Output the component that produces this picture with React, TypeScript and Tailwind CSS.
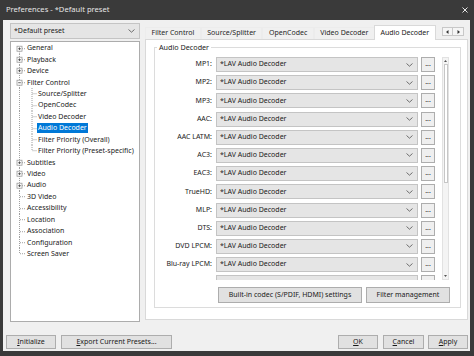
import React from 'react';

type TreeNode = {
  label: string;
  kind: 'plus' | 'minus' | 'leaf' | 'child';
  selected?: boolean;
  lastChild?: boolean;
};

const treeItems: TreeNode[] = [
  { label: 'General', kind: 'plus' },
  { label: 'Playback', kind: 'plus' },
  { label: 'Device', kind: 'plus' },
  { label: 'Filter Control', kind: 'minus' },
  { label: 'Source/Splitter', kind: 'child' },
  { label: 'OpenCodec', kind: 'child' },
  { label: 'Video Decoder', kind: 'child' },
  { label: 'Audio Decoder', kind: 'child', selected: true },
  { label: 'Filter Priority (Overall)', kind: 'child' },
  { label: 'Filter Priority (Preset-specific)', kind: 'child', lastChild: true },
  { label: 'Subtitles', kind: 'plus' },
  { label: 'Video', kind: 'plus' },
  { label: 'Audio', kind: 'plus' },
  { label: '3D Video', kind: 'leaf' },
  { label: 'Accessibility', kind: 'leaf' },
  { label: 'Location', kind: 'leaf' },
  { label: 'Association', kind: 'leaf' },
  { label: 'Configuration', kind: 'leaf' },
  { label: 'Screen Saver', kind: 'leaf' },
];

// last entry is the row scrolled mostly out of view
const codecs = [
  'MP1', 'MP2', 'MP3', 'AAC', 'AAC LATM', 'AC3', 'EAC3', 'TrueHD',
  'MLP', 'DTS', 'DVD LPCM', 'Blu-ray LPCM', '',
];

const tabs = ['Filter Control', 'Source/Splitter', 'OpenCodec', 'Video Decoder', 'Audio Decoder'];

const ROW_H = 11.44;
const LINE = '#a0a0a0';

const Chevron = () => (
  <svg width="7" height="4" viewBox="0 0 7 4" className="shrink-0">
    <path d="M0.5 0.5 L3.5 3.2 L6.5 0.5" fill="none" stroke="#606060" strokeWidth="0.9" />
  </svg>
);

const Combo = ({ text, className }: { text: string; className: string }) => (
  <div className={`flex items-center bg-[#e5e5e5] border border-[#c4c4c4] pl-[3px] pr-[4px] ${className}`}>
    <span className="flex-1 truncate">{text}</span>
    <Chevron />
  </div>
);

const TreeRow = ({ node, first, last }: { node: TreeNode; first: boolean; last: boolean }) => {
  const c = ROW_H / 2;
  const isChild = node.kind === 'child';
  return (
    <div className="flex items-center h-[11.44px]">
      <svg width="14" height={ROW_H} className="shrink-0">
        <line x1="7.5" y1={first ? c : 0} x2="7.5" y2={last ? c : ROW_H} stroke={LINE} strokeDasharray="1 1" />
        {!isChild && <line x1="8" y1={c} x2="14" y2={c} stroke={LINE} strokeDasharray="1 1" />}
        {(node.kind === 'plus' || node.kind === 'minus') && (
          <g>
            <rect x="5" y={c - 2.5} width="5" height="5" fill="#fff" stroke="#9c9c9c" strokeWidth="0.8" />
            <line x1="6.2" y1={c} x2="8.8" y2={c} stroke="#404040" strokeWidth="0.8" />
            {node.kind === 'plus' && <line x1="7.5" y1={c - 1.3} x2="7.5" y2={c + 1.3} stroke="#404040" strokeWidth="0.8" />}
          </g>
        )}
      </svg>
      {isChild && (
        <svg width="11" height={ROW_H} className="shrink-0">
          <line x1="6" y1="0" x2="6" y2={node.lastChild ? c : ROW_H} stroke={LINE} strokeDasharray="1 1" />
          <line x1="6.5" y1={c} x2="11" y2={c} stroke={LINE} strokeDasharray="1 1" />
        </svg>
      )}
      <span
        className={`px-[1px] leading-[10px] whitespace-nowrap ${node.selected ? 'bg-[#0078d7] text-white' : 'text-[#1a1a1a]'}`}
      >
        {node.label}
      </span>
    </div>
  );
};

const Btn = ({ children, className }: { children: React.ReactNode; className: string }) => (
  <div className={`flex items-center justify-center bg-[#e1e1e1] border border-[#adadad] text-[#1a1a1a] ${className}`}>
    {children}
  </div>
);

export default function App() {
  return (
    <div className="w-[474px] h-[356px] bg-[#3a3a3a] flex flex-col overflow-hidden font-['Noto_Sans',sans-serif] text-[7px] text-[#1a1a1a]">
      {/* title bar */}
      <div className="h-[20px] shrink-0 flex items-center justify-between pl-[6px] pr-[6px] text-[#e6e6e6] text-[7.6px]">
        <span>Preferences - *Default preset</span>
        <svg width="6" height="6" viewBox="0 0 6 6">
          <path d="M0.5 0.5 L5.5 5.5 M5.5 0.5 L0.5 5.5" stroke="#e6e6e6" strokeWidth="1" />
        </svg>
      </div>

      <div className="h-[331px] ml-[3px] mr-[4px] bg-[#f0f0f0] flex flex-col">
        <div className="flex gap-[5px] pl-[7px] pr-[2px] pt-[3px]">
          {/* left column */}
          <div className="w-[130px] flex flex-col gap-[2px]">
            <Combo text="*Default preset" className="h-[16px]" />
            <div className="h-[281px] bg-white border border-[#acacac] pt-[0.5px] pl-[1px]">
              {treeItems.map((n, i) => (
                <TreeRow key={n.label} node={n} first={i === 0} last={i === treeItems.length - 1} />
              ))}
            </div>
          </div>

          {/* right column */}
          <div className="flex-1 flex flex-col pt-[2px]">
            <div className="flex items-end h-[14px]">
              {tabs.map((t) =>
                t === 'Audio Decoder' ? (
                  <div
                    key={t}
                    className="relative z-10 h-[15px] -mb-px -mx-[1px] px-[5.5px] flex items-center bg-white border border-b-0 border-[#d9d9d9]"
                  >
                    {t}
                  </div>
                ) : (
                  <div key={t} className="h-[12px] px-[5.5px] flex items-center border border-b-0 border-[#ececec] text-[#262626]">
                    {t}
                  </div>
                )
              )}
              <div className="ml-auto mr-[4px] mb-[3px] flex">
                <div className="w-[11px] h-[9px] border border-[#c8c8c8] bg-[#f5f5f5] flex items-center justify-center">
                  <svg width="3" height="4" viewBox="0 0 3 4"><path d="M2.5 0 L0 2 L2.5 4 Z" fill="#333" /></svg>
                </div>
                <div className="w-[11px] h-[9px] border border-l-0 border-[#c8c8c8] bg-[#f5f5f5] flex items-center justify-center">
                  <svg width="3" height="4" viewBox="0 0 3 4"><path d="M0.5 0 L3 2 L0.5 4 Z" fill="#333" /></svg>
                </div>
              </div>
            </div>

            <div className="h-[281px] bg-white border border-[#d9d9d9] pl-[8px] pr-[6px] pt-[2px]">
              <fieldset className="border border-[#dcdcdc] pb-[4px]">
                <legend className="ml-[2px] px-[2px] leading-[10px] text-[7.2px]">Audio Decoder</legend>
                <div className="flex pt-[5px]">
                  <div className="h-[223px] overflow-hidden flex flex-col gap-[3.2px] w-[281px]">
                    {codecs.map((c, i) => (
                      <div key={i} className="flex items-center shrink-0 h-[15px]">
                        <span className="w-[58px] text-right pr-[1px] whitespace-nowrap">{c ? `${c}:` : ''}</span>
                        <Combo text={c ? '*LAV Audio Decoder' : ''} className="ml-[3px] w-[202px] h-[15px]" />
                        <div className="ml-[3px] w-[14px] h-[15px] bg-[#efefef] border border-[#adadad] flex items-center justify-center leading-none pb-[2px]">
                          {c ? '...' : ''}
                        </div>
                      </div>
                    ))}
                  </div>
                  <div className="ml-[6px] w-[7px] h-[223px] flex flex-col bg-[#f4f4f4] border border-[#e2e2e2]">
                    <div className="h-[6px] flex items-center justify-center">
                      <svg width="3" height="2" viewBox="0 0 3 2"><path d="M0 2 L1.5 0 L3 2 Z" fill="#555" /></svg>
                    </div>
                    <div className="flex-1 px-[0.5px]">
                      <div className="h-[119px] bg-white border border-[#c6c6c6]" />
                    </div>
                    <div className="h-[6px] flex items-center justify-center">
                      <svg width="3" height="2" viewBox="0 0 3 2"><path d="M0 0 L1.5 2 L3 0 Z" fill="#555" /></svg>
                    </div>
                  </div>
                </div>
                <div className="flex justify-end gap-[4px] pr-[10px] mt-[7px]">
                  <Btn className="w-[144px] h-[16px]">Built-in codec (S/PDIF, HDMI) settings</Btn>
                  <Btn className="w-[84px] h-[16px]">Filter management</Btn>
                </div>
              </fieldset>
            </div>
          </div>
        </div>

        {/* bottom bar */}
        <div className="flex items-center pl-[3px] pr-[2px] mt-[13px] h-[14px]">
          <Btn className="w-[50px] h-[14px]">
            <span><span className="underline">I</span>nitialize</span>
          </Btn>
          <Btn className="ml-[5px] w-[111px] h-[14px]">
            <span><span className="underline">E</span>xport Current Presets...</span>
          </Btn>
          <Btn className="ml-auto w-[40px] h-[14px]">
            <span><span className="underline">O</span>K</span>
          </Btn>
          <Btn className="ml-[5px] w-[41px] h-[14px]">
            <span><span className="underline">C</span>ancel</span>
          </Btn>
          <Btn className="ml-[4px] w-[40px] h-[14px]">
            <span><span className="underline">A</span>pply</span>
          </Btn>
        </div>
      </div>
    </div>
  );
}
